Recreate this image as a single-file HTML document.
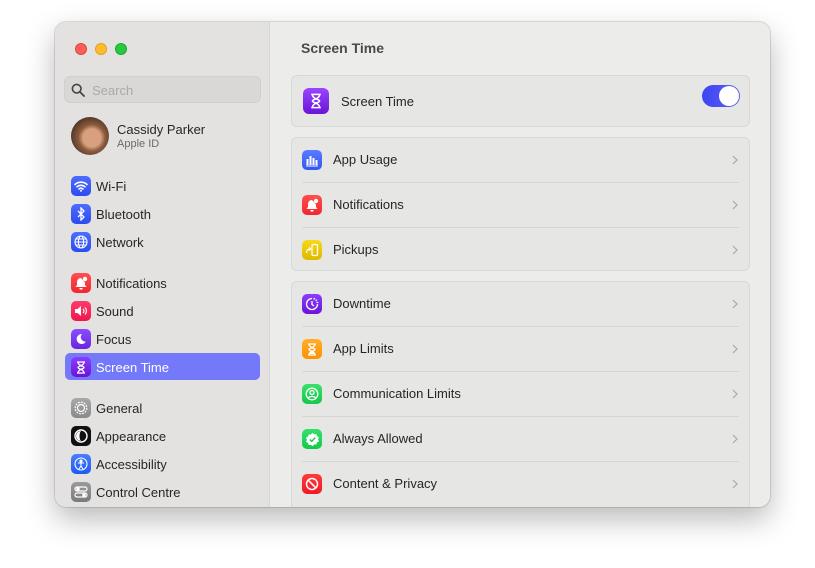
<!DOCTYPE html>
<html><head><meta charset="utf-8"><style>
*{margin:0;padding:0;box-sizing:border-box}
body{width:815px;height:568px;background:#fff;font-family:"Liberation Sans",sans-serif;position:relative;overflow:hidden}
.win{position:absolute;left:55px;top:22px;width:715px;height:485px;border-radius:11px;background:#ececeb;overflow:hidden;box-shadow:0 12px 30px rgba(0,0,0,.28),0 0 0 1px rgba(0,0,0,.12)}
.side{position:absolute;left:0;top:0;width:215px;height:485px;background:#e3e2e1;border-right:1px solid #d6d6d6}
.a{position:absolute}
.tl{position:absolute;top:21px;width:12px;height:12px;border-radius:50%}
.ic{position:absolute;width:20px;height:20px;border-radius:5px;display:flex;align-items:center;justify-content:center}
.st{position:absolute;left:41px;font-size:13px;color:#262626}
.card{position:absolute;left:236px;width:459px;background:#e6e6e5;border:1px solid #d8d8d8;border-radius:6px}
.row{position:absolute;left:0;width:100%;height:45px}
.row .ic{left:10px;top:12px}
.row .t{position:absolute;left:41px;top:14px;font-size:13px;color:#262626}
.row .ch{position:absolute;right:11px;top:17px}
.sep{position:absolute;left:10px;right:10px;height:1px;background:#d6d6d6}
</style></head><body>
<div class="win">
 <div class="side">
  <div class="tl" style="left:20px;background:#fe5f57;border:1px solid #e0443e"></div>
  <div class="tl" style="left:40px;background:#febc2e;border:1px solid #dea123"></div>
  <div class="tl" style="left:60px;background:#28c840;border:1px solid #1aab29"></div>
  <div class="a" style="left:9px;top:54px;width:197px;height:27px;background:#d9d8d7;border:1px solid #d0d0cf;border-radius:6px">
   <svg class="a" style="left:6px;top:6px" width="14" height="14" viewBox="0 0 14 14"><circle cx="5.7" cy="5.7" r="4.3" fill="none" stroke="#444" stroke-width="1.6"/><path d="M9 9l4 4" stroke="#444" stroke-width="1.8" stroke-linecap="round"/></svg>
   <span class="a" style="left:27px;top:6px;font-size:13px;color:#a9a9a9">Search</span>
  </div>
  <div class="a" style="left:16px;top:95px;width:38px;height:38px;border-radius:50%;background:radial-gradient(circle at 55% 55%,#d9a080 0 30%,#8b5a3c 45%,#4a3428 75%)"></div>
  <div class="a" style="left:62px;top:100px;font-size:13px;color:#262626">Cassidy Parker</div>
  <div class="a" style="left:62px;top:116px;font-size:11px;color:#6a6a6a">Apple ID</div>

  <div class="a" style="left:10px;top:331px;width:195px;height:27px;background:#7479fa;border-radius:5px"></div>

  <div class="ic" style="left:16px;top:154px;background:linear-gradient(#4d6cff,#2d4cf0)"><svg width="14" height="12" viewBox="0 0 14 12"><path d="M1 4.5a9 9 0 0 1 12 0M3 6.8a6 6 0 0 1 8 0M5 9a3 3 0 0 1 4 0" stroke="#fff" stroke-width="1.6" fill="none" stroke-linecap="round"/><circle cx="7" cy="10.8" r="1" fill="#fff"/></svg></div>
  <div class="st" style="top:157px">Wi-Fi</div>
  <div class="ic" style="left:16px;top:182px;background:linear-gradient(#4d6cff,#2d4cf0)"><svg width="10" height="14" viewBox="0 0 10 14"><path d="M2 4l6 6-3 3V1l3 3-6 6" stroke="#fff" stroke-width="1.3" fill="none"/></svg></div>
  <div class="st" style="top:185px">Bluetooth</div>
  <div class="ic" style="left:16px;top:210px;background:linear-gradient(#4d6cff,#2d4cf0)"><svg width="14" height="14" viewBox="0 0 14 14" fill="none" stroke="#fff" stroke-width="1.1"><circle cx="7" cy="7" r="6"/><ellipse cx="7" cy="7" rx="2.6" ry="6"/><path d="M1 7h12M2 4h10M2 10h10"/></svg></div>
  <div class="st" style="top:213px">Network</div>

  <div class="ic" style="left:16px;top:251px;background:linear-gradient(#ff4f4f,#f2262e)"><svg width="14" height="14" viewBox="0 0 14 14"><path d="M7 2c-2.5 0-4 2-4 4.5V9L1.5 11h11L11 9V6.5" fill="#fff"/><circle cx="11" cy="3" r="2.2" fill="#fff"/><rect x="5.5" y="12" width="3" height="1.5" fill="#fff"/></svg></div>
  <div class="st" style="top:254px">Notifications</div>
  <div class="ic" style="left:16px;top:279px;background:linear-gradient(#ff3b6b,#f0164f)"><svg width="14" height="12" viewBox="0 0 14 12"><path d="M1 4h2.5L7 1v10L3.5 8H1z" fill="#fff"/><path d="M9 4a2.5 2.5 0 0 1 0 4M11 2.5a5 5 0 0 1 0 7" stroke="#fff" stroke-width="1.1" fill="none"/></svg></div>
  <div class="st" style="top:282px">Sound</div>
  <div class="ic" style="left:16px;top:307px;background:linear-gradient(#8a4dff,#6a24e0)"><svg width="12" height="12" viewBox="0 0 12 12"><path d="M7 1a5 5 0 1 0 4 7.5A4.5 4.5 0 0 1 7 1z" fill="#fff"/></svg></div>
  <div class="st" style="top:310px">Focus</div>
  <div class="ic" style="left:16px;top:335px;background:linear-gradient(#8a3dff,#6a14d8)"><svg width="10" height="13" viewBox="0 0 10 13"><path d="M1 1h8M1 12h8M2 1c0 4 6 4 6 5.5S2 8 2 12M8 1c0 4-6 4-6 5.5S8 8 8 12" stroke="#fff" stroke-width="1.3" fill="none"/></svg></div>
  <div class="st" style="top:338px;color:#fff">Screen Time</div>

  <div class="ic" style="left:16px;top:376px;background:linear-gradient(#a8a8a8,#8a8a8a)"><svg width="14" height="14" viewBox="0 0 14 14" fill="none" stroke="#fff" stroke-width="1.2"><circle cx="7" cy="7" r="5.8" stroke-dasharray="2 1"/><circle cx="7" cy="7" r="3.5"/></svg></div>
  <div class="st" style="top:379px">General</div>
  <div class="ic" style="left:16px;top:404px;background:#111"><svg width="14" height="14" viewBox="0 0 14 14"><circle cx="7" cy="7" r="6" fill="none" stroke="#fff" stroke-width="1.4"/><path d="M7 2a5 5 0 0 0 0 10c-2-2-2-8 0-10z" fill="#fff"/></svg></div>
  <div class="st" style="top:407px">Appearance</div>
  <div class="ic" style="left:16px;top:432px;background:linear-gradient(#4d7cff,#1d5cf0)"><svg width="14" height="14" viewBox="0 0 14 14" fill="none" stroke="#fff" stroke-width="1.1"><circle cx="7" cy="7" r="6"/><circle cx="7" cy="4" r="1" fill="#fff"/><path d="M4 6h6M7 6v3l-2 3M7 9l2 3"/></svg></div>
  <div class="st" style="top:435px">Accessibility</div>
  <div class="ic" style="left:16px;top:460px;background:linear-gradient(#9a9a9a,#7c7c7c)"><svg width="14" height="14" viewBox="0 0 14 14" fill="none" stroke="#fff" stroke-width="1.2"><rect x="1" y="2" width="12" height="4" rx="2"/><rect x="1" y="8" width="12" height="4" rx="2"/><circle cx="4" cy="4" r="1.2" fill="#fff"/><circle cx="10" cy="10" r="1.2" fill="#fff"/></svg></div>
  <div class="st" style="top:463px">Control Centre</div>
 </div>

 <div class="a" style="left:246px;top:18px;font-size:14px;font-weight:bold;color:#4a4a4a">Screen Time</div>

 <div class="card" style="top:53px;height:52px">
  <div class="ic" style="left:11px;top:12px;width:26px;height:26px;border-radius:6px;background:linear-gradient(#9a45ff,#6a14d8)"><svg width="12" height="16" viewBox="0 0 10 13"><path d="M1 1h8M1 12h8M2 1c0 4 6 4 6 5.5S2 8 2 12M8 1c0 4-6 4-6 5.5S8 8 8 12" stroke="#fff" stroke-width="1.3" fill="none"/></svg></div>
  <div class="a" style="left:49px;top:18px;font-size:13px;color:#262626">Screen Time</div>
  <div class="a" style="left:410px;top:9px;width:38px;height:22px;border-radius:11px;background:linear-gradient(90deg,#3e45f5,#5a60f2)"><div class="a" style="left:17px;top:1px;width:20px;height:20px;border-radius:50%;background:#fff"></div></div>
 </div>

 <div class="card" style="top:115px;height:134px">
  <div class="row" style="top:0"><div class="ic" style="background:linear-gradient(#5a7bff,#3456f0)"><svg width="14" height="13" viewBox="0 0 14 13" fill="#fff"><rect x="1.5" y="5" width="2" height="6"/><rect x="4.5" y="2" width="2" height="9"/><rect x="7.5" y="4" width="2" height="7"/><rect x="10.5" y="6" width="2" height="5"/><rect x="1" y="11.5" width="12" height="1"/></svg></div><div class="t">App Usage</div><svg class="ch" width="6" height="10" viewBox="0 0 6 10"><path d="M1 1l4 4-4 4" stroke="#a8a8a8" stroke-width="1.2" fill="none"/></svg></div>
  <div class="sep" style="top:44px"></div>
  <div class="row" style="top:45px"><div class="ic" style="background:linear-gradient(#ff4f4f,#f2262e)"><svg width="14" height="14" viewBox="0 0 14 14"><path d="M7 2c-2.5 0-4 2-4 4.5V9L1.5 11h11L11 9V6.5" fill="#fff"/><circle cx="11" cy="3" r="2.2" fill="#fff"/><rect x="5.5" y="12" width="3" height="1.5" fill="#fff"/></svg></div><div class="t">Notifications</div><svg class="ch" width="6" height="10" viewBox="0 0 6 10"><path d="M1 1l4 4-4 4" stroke="#a8a8a8" stroke-width="1.2" fill="none"/></svg></div>
  <div class="sep" style="top:89px"></div>
  <div class="row" style="top:90px"><div class="ic" style="background:linear-gradient(#f7d81a,#e0b800)"><svg width="14" height="14" viewBox="0 0 14 14" fill="none" stroke="#fff" stroke-width="1.2"><rect x="7" y="1.5" width="5.5" height="11" rx="1.2"/><path d="M1.5 10c0-3 1.5-4 4-4M4 4.5l1.8 1.5L4 7.5"/></svg></div><div class="t">Pickups</div><svg class="ch" width="6" height="10" viewBox="0 0 6 10"><path d="M1 1l4 4-4 4" stroke="#a8a8a8" stroke-width="1.2" fill="none"/></svg></div>
 </div>

 <div class="card" style="top:259px;height:240px">
  <div class="row" style="top:0"><div class="ic" style="background:linear-gradient(#8a3dff,#6a14d8)"><svg width="14" height="14" viewBox="0 0 14 14" fill="none" stroke="#fff" stroke-width="1.3"><path d="M7 1.5A5.5 5.5 0 1 0 12.5 7" /><path d="M7 4v3.5l2 1.5"/><path d="M9 2l.5-.5M11 3.5l.6-.4M12 5.5h.8" stroke-linecap="round"/></svg></div><div class="t">Downtime</div><svg class="ch" width="6" height="10" viewBox="0 0 6 10"><path d="M1 1l4 4-4 4" stroke="#a8a8a8" stroke-width="1.2" fill="none"/></svg></div>
  <div class="sep" style="top:44px"></div>
  <div class="row" style="top:45px"><div class="ic" style="background:linear-gradient(#ffae2a,#ff9000)"><svg width="10" height="13" viewBox="0 0 10 13"><path d="M1 1h8M1 12h8M2 1c0 4 6 4 6 5.5S2 8 2 12M8 1c0 4-6 4-6 5.5S8 8 8 12" stroke="#fff" stroke-width="1.3" fill="none"/><path d="M3 11l2-3 2 3z" fill="#fff"/></svg></div><div class="t">App Limits</div><svg class="ch" width="6" height="10" viewBox="0 0 6 10"><path d="M1 1l4 4-4 4" stroke="#a8a8a8" stroke-width="1.2" fill="none"/></svg></div>
  <div class="sep" style="top:89px"></div>
  <div class="row" style="top:90px"><div class="ic" style="background:linear-gradient(#38e06a,#16c84c)"><svg width="14" height="14" viewBox="0 0 14 14" fill="none" stroke="#fff" stroke-width="1.3"><circle cx="7" cy="7" r="5.8"/><circle cx="7" cy="5.5" r="2"/><path d="M3.3 11c1-2 6.4-2 7.4 0"/></svg></div><div class="t">Communication Limits</div><svg class="ch" width="6" height="10" viewBox="0 0 6 10"><path d="M1 1l4 4-4 4" stroke="#a8a8a8" stroke-width="1.2" fill="none"/></svg></div>
  <div class="sep" style="top:134px"></div>
  <div class="row" style="top:135px"><div class="ic" style="background:linear-gradient(#38e06a,#16c84c)"><svg width="15" height="15" viewBox="0 0 14 14"><path d="M7 .8l1.6 1.3 2-.2.6 2 1.8 1-.8 1.9.8 1.9-1.8 1-.6 2-2-.2L7 13.2l-1.6-1.3-2 .2-.6-2-1.8-1 .8-1.9-.8-1.9 1.8-1 .6-2 2 .2z" fill="#fff"/><path d="M4.5 7l1.8 1.8 3.3-3.6" stroke="#16c84c" stroke-width="1.3" fill="none"/></svg></div><div class="t">Always Allowed</div><svg class="ch" width="6" height="10" viewBox="0 0 6 10"><path d="M1 1l4 4-4 4" stroke="#a8a8a8" stroke-width="1.2" fill="none"/></svg></div>
  <div class="sep" style="top:179px"></div>
  <div class="row" style="top:180px"><div class="ic" style="background:linear-gradient(#ff3a3a,#ee1a24)"><svg width="14" height="14" viewBox="0 0 14 14" fill="none" stroke="#fff" stroke-width="1.5"><circle cx="7" cy="7" r="5.5"/><path d="M3.2 3.2l7.6 7.6"/></svg></div><div class="t">Content &amp; Privacy</div><svg class="ch" width="6" height="10" viewBox="0 0 6 10"><path d="M1 1l4 4-4 4" stroke="#a8a8a8" stroke-width="1.2" fill="none"/></svg></div>
 </div>
</div>
</body></html>
